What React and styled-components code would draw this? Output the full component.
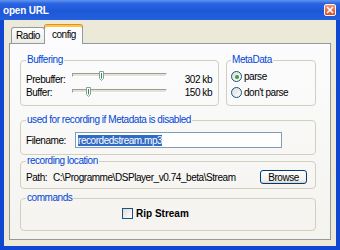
import React from "react";
import styled, { createGlobalStyle } from "styled-components";

const GlobalStyle = createGlobalStyle`
  html, body {
    margin: 0;
    padding: 0;
    background: #ece9d8;
  }
  body {
    font-family: "Liberation Sans", Arial, sans-serif;
    font-size: 10px;
    letter-spacing: -0.45px;
    color: #000;
  }
  * {
    box-sizing: border-box;
  }
`;

const Window = styled.div`
  width: 340px;
  height: 250px;
  display: flex;
  flex-direction: column;
  background: #0f46d2;
`;

const TitleBar = styled.div`
  height: 20px;
  flex: none;
  display: flex;
  align-items: center;
  justify-content: space-between;
  padding: 0 4px 0 3px;
  background: linear-gradient(180deg, #5f95f0 0%, #2a64e0 18%, #1c57d8 55%, #2660dc 100%);
  color: #fff;
  font-weight: bold;
  font-size: 10px;
  letter-spacing: -0.2px;
`;

const CloseButton = styled.div`
  width: 12px;
  height: 12px;
  border: 1px solid #f4f4f4;
  border-radius: 2px;
  background: linear-gradient(180deg, #f3926f, #d9502c);
  display: flex;
  align-items: center;
  justify-content: center;
`;

const Frame = styled.div`
  flex: 1;
  display: flex;
  padding: 0 4px 4px 4px;
  background: #0f46d2;
`;

const Body = styled.div`
  flex: 1;
  display: flex;
  flex-direction: column;
  background: #ece9d8;
  padding: 4px 5px 6px 5px;
`;

const TabRow = styled.div`
  height: 20px;
  display: flex;
  align-items: flex-end;
  padding-left: 2px;
  margin-bottom: -1px;
  position: relative;
  z-index: 1;
`;

const Tab = styled.div`
  height: ${(p) => (p.$active ? 20 : 16)}px;
  margin-bottom: ${(p) => (p.$active ? 0 : 1)}px;
  margin-left: ${(p) => (p.$active ? -1 : 0)}px;
  padding: ${(p) => (p.$active ? "0 6px 0 7px" : "0 4px 0 4px")};
  display: flex;
  align-items: center;
  border: 1px solid #919b9c;
  border-bottom: none;
  border-radius: 3px 3px 0 0;
  background: ${(p) =>
    p.$active ? "#fcfcfe" : "linear-gradient(180deg, #fefefe, #ecebe5)"};
  border-top-color: ${(p) => (p.$active ? "#e68b2c" : "#919b9c")};
  box-shadow: ${(p) => (p.$active ? "inset 0 2px 0 #ffc83c" : "none")};
`;

const Panel = styled.div`
  flex: 1;
  display: flex;
  flex-direction: column;
  border: 1px solid #919b9c;
  background: linear-gradient(180deg, #fcfcfe 0%, #f4f3ee 100%);
  padding: 10px 14px 0 10px;
`;

const Row = styled.div`
  display: flex;
  gap: 7px;
`;

const Group = styled.fieldset`
  margin: ${(p) => p.$mt || 0}px 0 0 0;
  padding: ${(p) => p.$pad};
  width: ${(p) => (p.$w ? `${p.$w}px` : "auto")};
  height: ${(p) => p.$h}px;
  border: 1px solid #d0d0bf;
  border-radius: 4px;
  min-width: 0;
`;

const Legend = styled.legend`
  padding: 0 1px;
  color: #0046d5;
  font-size: 10px;
  line-height: 12px;
`;

const BufferGrid = styled.div`
  display: grid;
  grid-template-columns: 46px 95px 1fr;
  grid-auto-rows: 13px;
  align-items: center;
`;

const Value = styled.span`
  text-align: right;
`;

const Slider = styled.div`
  position: relative;
  align-self: start;
  height: 10px;
  margin-top: ${(p) => p.$top}px;
`;

const Track = styled.div`
  position: absolute;
  left: 0;
  right: 0;
  top: 2px;
  height: 4px;
  border: 1px solid;
  border-color: #9d9c95 #fff #fff #9d9c95;
  background: #e3e1d8;
`;

const Thumb = styled.svg`
  position: absolute;
  top: 0;
`;

const RadioList = styled.div`
  display: flex;
  flex-direction: column;
  gap: 3px;
`;

const RadioRow = styled.div`
  display: flex;
  align-items: center;
  gap: 2px;
  height: 13px;
`;

const RadioCircle = styled.span`
  position: relative;
  width: 11px;
  height: 11px;
  border: 1px solid #1c5180;
  border-radius: 50%;
  background: linear-gradient(135deg, #dcdcd7, #fff);

  &::after {
    content: "";
    display: ${(p) => (p.$checked ? "block" : "none")};
    position: absolute;
    left: 2.5px;
    top: 2.5px;
    width: 4px;
    height: 4px;
    border-radius: 50%;
    background: #30a430;
  }
`;

const FieldRow = styled.div`
  display: flex;
  align-items: center;
  height: ${(p) => p.$h}px;
`;

const Label = styled.span`
  width: ${(p) => p.$w}px;
  flex: none;
`;

const FileInput = styled.div`
  width: 207px;
  height: 16px;
  border: 1px solid #7f9db9;
  background: #fff;
  padding: 0 2px;
  display: flex;
  align-items: center;
`;

const Selected = styled.span`
  background: #316ac5;
  color: #fff;
  line-height: 11px;
`;

const Button = styled.div`
  margin-left: auto;
  width: 47px;
  height: 14px;
  border: 1px solid #003c74;
  border-radius: 3px;
  background: linear-gradient(180deg, #ffffff, #f0efea 80%, #d8d3c9);
  display: flex;
  align-items: center;
  justify-content: center;
`;

const CheckRow = styled.div`
  display: flex;
  align-items: center;
  gap: 3px;
  margin-left: 96px;
  height: 11px;
  font-weight: bold;
  letter-spacing: 0;
`;

const CheckBox = styled.span`
  width: 11px;
  height: 11px;
  border: 1px solid #1c5180;
  background: linear-gradient(135deg, #dcdcd7, #fff);
`;

function TrackBar({ pos, top }) {
  return (
    <Slider $top={top}>
      <Track />
      <Thumb width="5" height="10" viewBox="0 0 5 10" style={{ left: pos }}>
        <path d="M0.5 0.5H4.5V7.5L2.5 9.5L0.5 7.5Z" fill="#fff" stroke="#8a9aae" />
        <path d="M2.5 2V7.5" stroke="#21a121" />
      </Thumb>
    </Slider>
  );
}

export default function App() {
  return (
    <Window>
      <GlobalStyle />
      <TitleBar>
        <span>open URL</span>
        <CloseButton>
          <svg width="8" height="8" viewBox="0 0 8 8">
            <path d="M1 1L7 7M7 1L1 7" stroke="#fff" strokeWidth="1.6" />
          </svg>
        </CloseButton>
      </TitleBar>
      <Frame>
        <Body>
          <TabRow>
            <Tab>Radio</Tab>
            <Tab $active>config</Tab>
          </TabRow>
          <Panel>
            <Row>
              <Group $w={199} $h={52} $pad="7px 6px 0 5px">
                <Legend>Buffering</Legend>
                <BufferGrid>
                  <span>Prebuffer:</span>
                  <TrackBar pos={27} top={-2} />
                  <Value>302 kb</Value>
                  <span>Buffer:</span>
                  <TrackBar pos={14} top={1} />
                  <Value>150 kb</Value>
                </BufferGrid>
              </Group>
              <Group $w={90} $h={52} $pad="4px 4px 0 4px">
                <Legend>MetaData</Legend>
                <RadioList>
                  <RadioRow>
                    <RadioCircle $checked />
                    parse
                  </RadioRow>
                  <RadioRow>
                    <RadioCircle />
                    don't parse
                  </RadioRow>
                </RadioList>
              </Group>
            </Row>
            <Group $mt={8} $h={41} $pad="6px 0 0 5px">
              <Legend>used for recording if Metadata is disabled</Legend>
              <FieldRow $h={16}>
                <Label $w={49}>Filename:</Label>
                <FileInput>
                  <Selected>recordedstream.mp3</Selected>
                </FileInput>
              </FieldRow>
            </Group>
            <Group $h={34} $pad="3px 8px 0 5px">
              <Legend>recording location</Legend>
              <FieldRow $h={14}>
                <Label $w={27}>Path:</Label>
                <span>C:\Programme\DSPlayer_v0.74_beta\Stream</span>
                <Button>Browse</Button>
              </FieldRow>
            </Group>
            <Group $mt={3} $h={39} $pad="4px 0 0 5px">
              <Legend>commands</Legend>
              <CheckRow>
                <CheckBox />
                Rip Stream
              </CheckRow>
            </Group>
          </Panel>
        </Body>
      </Frame>
    </Window>
  );
}
